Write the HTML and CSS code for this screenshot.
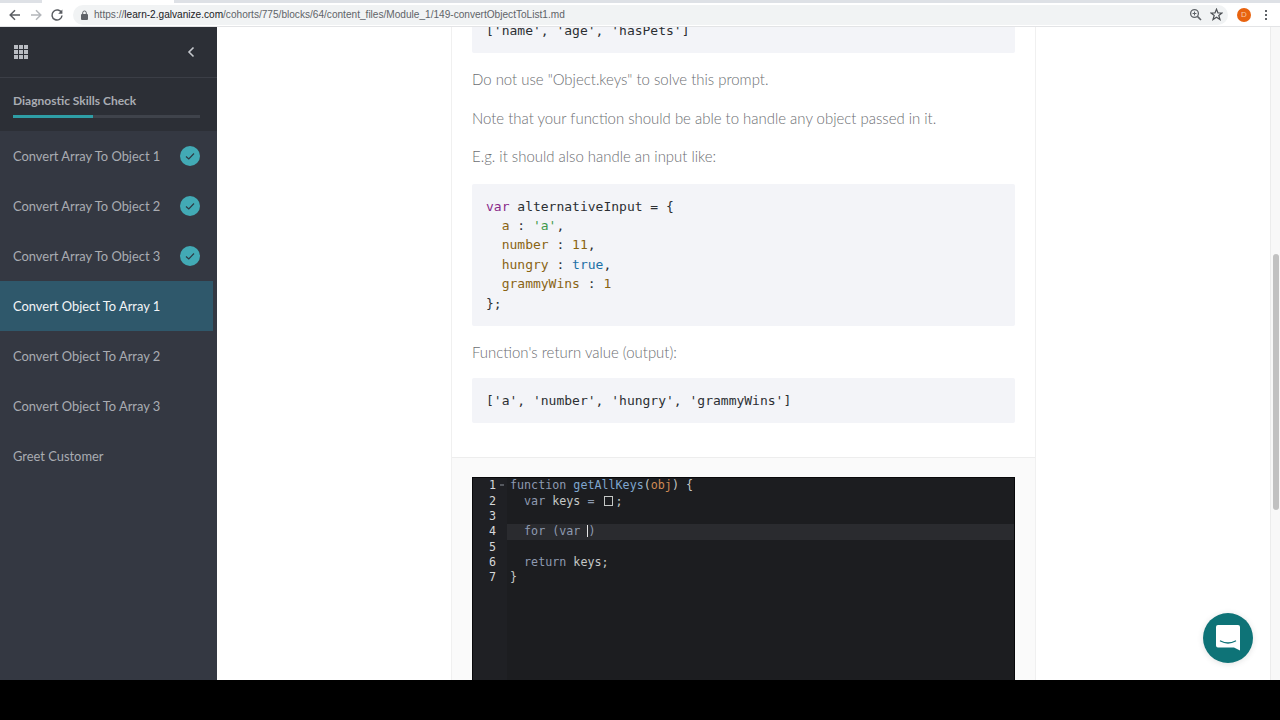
FILE: index.html
```html
<!DOCTYPE html>
<html lang="en">
<head>
    <meta charset="UTF-8">
    <title>Convert Object To Array 1</title>
    <link rel="stylesheet" href="styles.css">
</head>
<body>
    <div class="window">
        <div class="tabstrip"><div class="tab"></div></div>
        <div class="toolbar">
            <svg class="nav" width="14" height="14" viewBox="0 0 14 14"><path d="M12 7H2.500M7 2.200 2.200 7 7 11.800" fill="none" stroke="#5a5d62" stroke-width="1.500"/></svg>
            <svg class="nav" width="14" height="14" viewBox="0 0 14 14"><path d="M2 7h9.500M7 2.200 11.800 7 7 11.800" fill="none" stroke="#b4b7bb" stroke-width="1.500"/></svg>
            <svg class="nav" width="14" height="14" viewBox="0 0 14 14"><path d="M11.600 5A5 5 0 1 0 12 7.500" fill="none" stroke="#5a5d62" stroke-width="1.500"/><path d="M12.400 1.600v4.200H8.200z" fill="#5a5d62"/></svg>
            <div class="omnibox">
                <svg class="lock" width="9" height="10" viewBox="0 0 9 10"><rect x="1" y="4" width="7" height="6" rx="1" fill="#5f6368"/><path d="M2.700 4V2.800a1.800 1.800 0 0 1 3.600 0V4" fill="none" stroke="#5f6368"/></svg>
                <span class="url"><span class="scheme">https://</span><span class="host">learn-2.galvanize.com</span><span class="scheme">/cohorts/775/blocks/64/content_files/Module_1/149-convertObjectToList1.md</span></span>
                <svg class="omni-icon" width="13" height="13" viewBox="0 0 13 13"><circle cx="5.500" cy="5.500" r="3.900" fill="none" stroke="#5f6368" stroke-width="1.300"/><path d="M8.400 8.400 12 12" stroke="#5f6368" stroke-width="1.600"/><path d="M3.600 5.500h3.800M5.500 3.600v3.800" stroke="#5f6368"/></svg>
                <svg class="omni-icon" width="13" height="13" viewBox="0 0 13 13"><path d="M6.500 1.200 8 5h4l-3.200 2.500 1.200 4-3.500-2.300L3 11.500l1.200-4L1 5h4z" fill="none" stroke="#4d5054" stroke-width="1.200"/></svg>
            </div>
            <div class="avatar">D</div>
            <div class="kebab"><i></i><i></i><i></i></div>
        </div>
        <div class="app">
            <aside class="sidebar">
                <div class="side-head">
                    <svg width="14" height="14" viewBox="0 0 14 14" fill="#b9bcc2"><rect width="4" height="4"/><rect x="5" width="4" height="4"/><rect x="10" width="4" height="4"/><rect y="5" width="4" height="4"/><rect x="5" y="5" width="4" height="4"/><rect x="10" y="5" width="4" height="4"/><rect y="10" width="4" height="4"/><rect x="5" y="10" width="4" height="4"/><rect x="10" y="10" width="4" height="4"/></svg>
                    <svg width="8" height="12" viewBox="0 0 8 12"><path d="M6.500 1.500 2 6l4.500 4.500" fill="none" stroke="#c4c7cc" stroke-width="1.600"/></svg>
                </div>
                <div class="side-title">
                    <div class="side-name">Diagnostic Skills Check</div>
                    <div class="progress"><div class="progress-fill"></div></div>
                </div>
                <ul class="lessons">
                    <li>Convert Array To Object 1 <span class="check"><svg width="20" height="20" viewBox="0 0 20 20"><path d="M6 10.500 8.800 13 14 7.500" fill="none" stroke="#2f3a44" stroke-width="1.200"/></svg></span></li>
                    <li>Convert Array To Object 2 <span class="check"><svg width="20" height="20" viewBox="0 0 20 20"><path d="M6 10.500 8.800 13 14 7.500" fill="none" stroke="#2f3a44" stroke-width="1.200"/></svg></span></li>
                    <li>Convert Array To Object 3 <span class="check"><svg width="20" height="20" viewBox="0 0 20 20"><path d="M6 10.500 8.800 13 14 7.500" fill="none" stroke="#2f3a44" stroke-width="1.200"/></svg></span></li>
                    <li class="active">Convert Object To Array 1</li>
                    <li>Convert Object To Array 2</li>
                    <li>Convert Object To Array 3</li>
                    <li>Greet Customer</li>
                </ul>
            </aside>
            <main class="main">
                <div class="column">
                    <section class="card">
                        <pre class="code">['name', 'age', 'hasPets']</pre>
                        <p>Do not use "Object.keys" to solve this prompt.</p>
                        <p>Note that your function should be able to handle any object passed in it.</p>
                        <p>E.g. it should also handle an input like:</p>
                        <pre class="code"><span class="kw">var</span> alternativeInput = {
  <span class="prop">a</span> : <span class="str">'a'</span>,
  <span class="prop">number</span> : <span class="prop">11</span>,
  <span class="prop">hungry</span> : <span class="bool">true</span>,
  <span class="prop">grammyWins</span> : <span class="prop">1</span>
};</pre>
                        <p class="output-label">Function's return value (output):</p>
                        <pre class="code">['a', 'number', 'hungry', 'grammyWins']</pre>
                    </section>
                    <section class="editor-wrap">
                        <div class="editor">
                            <div class="gutter">1<br>2<br>3<br>4<br>5<br>6<br>7</div>
                            <div class="lines">
                                <div class="line"><span class="e-kw">function</span> <span class="e-fn">getAllKeys</span>(<span class="e-arg">obj</span>) {</div>
                                <div class="line">  <span class="e-kw">var</span> keys <span class="e-kw">=</span> <span class="e-box"></span>;</div>
                                <div class="line">&nbsp;</div>
                                <div class="line current">  <span class="e-kw">for</span> <span class="e-kw">(var</span> <span class="cursor"></span><span class="e-kw">)</span></div>
                                <div class="line">&nbsp;</div>
                                <div class="line">  <span class="e-kw">return</span> keys;</div>
                                <div class="line">}</div>
                            </div>
                        </div>
                    </section>
                </div>
                <div class="scrollbar"><div class="thumb"></div></div>
                <button class="chat" aria-label="Chat">
                    <svg width="26" height="28" viewBox="0 0 26 28"><path d="M3 1h20a2 2 0 0 1 2 2v23.500l-6-3H3a2 2 0 0 1-2-2V3a2 2 0 0 1 2-2z" fill="#fff"/><path d="M5.500 17c4.500 2.400 10.500 2.400 15 0" fill="none" stroke="#0e7377" stroke-width="1.400" stroke-linecap="round"/></svg>
                </button>
            </main>
        </div>
    </div>
</body>
</html>
```

FILE: styles.css
```css
* {
    box-sizing: border-box;
}
html,
body {
    margin: 0;
    height: 720px;
    overflow: hidden;
    background-color: #000;
}
body {
    font-family: "Lato", "Open Sans", sans-serif;
}
.window {
    height: 680px;
    display: flex;
    flex-direction: column;
    background-color: #fff;
}

/* browser chrome */
.tabstrip {
    height: 3px;
    background-color: #dee1e6;
    padding-left: 42px;
}
.tab {
    width: 132px;
    height: 3px;
    background-color: #fff;
}
.toolbar {
    height: 24px;
    display: flex;
    align-items: center;
    padding-left: 8px;
    background-color: #fff;
    border-bottom: 1px solid #e3e4e6;
}
.nav {
    margin-right: 7px;
}
.omnibox {
    width: 1155px;
    margin-left: 2px;
    height: 20px;
    display: flex;
    align-items: center;
    padding: 0 5px 0 7px;
    border-radius: 10px;
    background-color: #f1f3f4;
}
.lock {
    margin-right: 5px;
}
.url {
    flex: 1;
    font-family: "Liberation Sans", sans-serif;
    font-size: 10.100px;
    white-space: nowrap;
}
.scheme {
    color: #5f6368;
}
.host {
    color: #202124;
}
.omni-icon {
    margin-left: 8px;
}
.avatar {
    width: 14px;
    height: 14px;
    margin-left: 9px;
    border-radius: 50%;
    background-color: #e8630f;
    color: #f7c9a5;
    font-family: "Liberation Sans", sans-serif;
    font-size: 8px;
    line-height: 14px;
    text-align: center;
}
.kebab {
    margin-left: 14px;
    display: flex;
    flex-direction: column;
    gap: 2px;
}
.kebab i {
    width: 2px;
    height: 2px;
    background-color: #5f6368;
}

.app {
    flex: 1;
    display: flex;
    min-height: 0;
}

/* sidebar */
.sidebar {
    width: 217px;
    flex-shrink: 0;
    background-color: #343842;
}
.side-head {
    height: 51px;
    display: flex;
    justify-content: space-between;
    align-items: center;
    padding: 0 22px 0 14px;
    background-color: #2c2f36;
    border-bottom: 1px solid #3b3e46;
}
.side-name {
    color: #a9acb3;
    font-size: 12px;
    font-weight: 700;
    line-height: 15px;
}
.side-title {
    height: 53px;
    padding: 15px 17px 0 13px;
    background-color: #2c2f36;
}
.progress {
    height: 3px;
    margin-top: 7px;
    background-color: #3f434b;
}
.progress-fill {
    width: 80px;
    height: 3px;
    background-color: #2e9ea6;
}
.lessons {
    list-style: none;
    margin: 0;
    padding: 0;
}
.lessons li {
    height: 50px;
    display: flex;
    justify-content: space-between;
    align-items: center;
    padding: 0 17px 0 13px;
    color: #a9acb2;
    font-size: 12.900px;
    font-weight: 400;
}
.lessons li.active {
    width: 213px;
    background-color: #2f586b;
    color: #f2f5f7;
}
.check {
    width: 20px;
    height: 20px;
    border-radius: 50%;
    background-color: #42aab5;
}
.check svg {
    display: block;
}

/* main area */
.main {
    flex: 1;
    position: relative;
    overflow: hidden;
    background-color: #fff;
}
.column {
    width: 585px;
    margin: -39px 0 0 234px;
    background-color: #fafafa;
    border-right: 1px solid #f0f0f0;
    border-left: 1px solid #f0f0f0;
}
.card {
    padding: 20px 20px 34px;
    background-color: #fff;
    border-bottom: 1px solid #ededed;
}
.card p {
    margin: 0 0 16.400px;
    color: #6c6e72;
    font-size: 14.950px;
    font-weight: 300;
    line-height: 22px;
}
.card .output-label {
    margin-bottom: 15px;
}
.code {
    margin: 0 0 15px;
    padding: 13px 14px;
    background-color: #f3f4f8;
    color: #2c2f33;
    font-family: "DejaVu Sans Mono", monospace;
    font-size: 13px;
    line-height: 19.400px;
    border-radius: 2px;
}
.code:last-child {
    margin-bottom: 0;
}
.kw {
    color: #8a2a8a;
}
.prop {
    color: #8a6414;
}
.str {
    color: #3f9a4c;
}
.bool {
    color: #1c70a6;
}

/* code editor */
.editor-wrap {
    padding: 19px 20px 0;
}
.editor {
    height: 300px;
    display: flex;
    background-color: #1c1d20;
    font-family: "DejaVu Sans Mono", monospace;
    font-size: 11.700px;
    line-height: 15.350px;
    color: #c5c8c6;
    border: 1px solid #08080a;
}
.gutter {
    position: relative;
    width: 34px;
    flex-shrink: 0;
    padding-right: 11px;
    text-align: right;
    color: #d6d7d9;
    background-color: #1f2024;
}
.gutter::after {
    content: "";
    position: absolute;
    top: 6px;
    right: 3px;
    width: 4px;
    height: 2px;
    background-color: #55585e;
}
.lines {
    flex: 1;
}
.line {
    padding-left: 3px;
    white-space: pre;
}
.current {
    background-color: #2a2b2f;
}
.e-kw {
    color: #8e9ab0;
}
.e-fn {
    color: #7fa6cf;
}
.e-arg {
    color: #d08a55;
}
.e-box {
    display: inline-block;
    width: 9px;
    height: 10px;
    margin: 0 3px 0 2px;
    border: 1px solid #c5c8c6;
    vertical-align: -1px;
}
.cursor {
    display: inline-block;
    width: 1px;
    height: 12px;
    background-color: #e6e6e6;
    vertical-align: -2px;
}

.scrollbar {
    position: absolute;
    top: 0;
    right: 0;
    bottom: 0;
    width: 10px;
    background-color: #f8f8f8;
    border-left: 1px solid #ececec;
}
.thumb {
    position: absolute;
    top: 227px;
    left: 2px;
    width: 6px;
    height: 256px;
    border-radius: 3px;
    background-color: #c1c1c1;
}
.chat {
    position: absolute;
    right: 27px;
    bottom: 17px;
    width: 50px;
    height: 50px;
    padding: 0;
    border: none;
    border-radius: 50%;
    background-color: #0e7377;
    box-shadow: 0 1px 6px rgba(0, 0, 0, 0.12);
    display: flex;
    align-items: center;
    justify-content: center;
}
```
